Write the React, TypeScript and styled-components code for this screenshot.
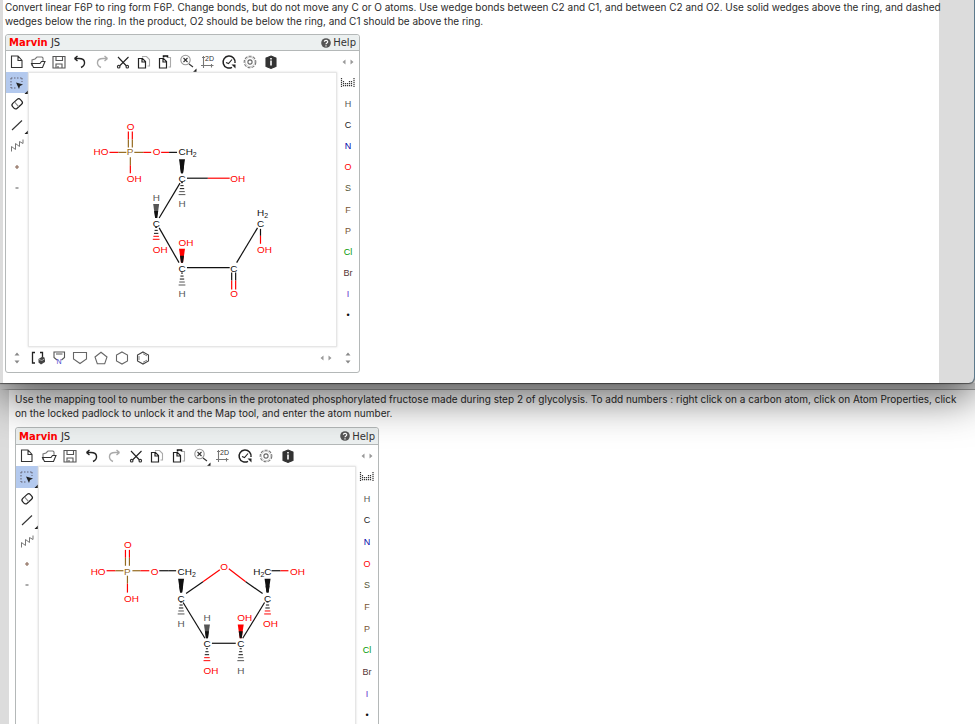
import React from "react";
import styled, { createGlobalStyle } from "styled-components";

const GlobalStyle = createGlobalStyle`
  * { box-sizing: border-box; }
  body {
    margin: 0;
    background: #fff;
    font-family: Verdana, "DejaVu Sans", sans-serif;
    font-size: 10px;
    color: #2b2b2b;
  }
`;

const Screen = styled.div`
  display: flex;
  flex-direction: column;
  height: 100vh;
  overflow: hidden;
`;

const FrontWindow = styled.section`
  display: flex;
  flex: none;
  z-index: 1;
  padding: 0 35px 0 3px;
  background: #dcdcdc;
  border-right: 1px solid #5d7a8c;
  border-bottom-right-radius: 6px;
  box-shadow: 0 14px 44px rgba(0, 0, 0, 0.62), 0 1px 1px rgba(0, 0, 0, 0.5);
`;

const FrontPage = styled.div`
  flex: 1;
  min-width: 0;
  padding: 0 0 10px 2px;
  background: #fff;
`;

const BackWindow = styled.section`
  display: flex;
  flex: 1;
  min-height: 0;
  flex-direction: column;
  border-top: 6px solid #dadada;
`;

const BackPage = styled.div`
  flex: 1;
  min-height: 0;
  padding: 2px 0 0 6px;
  border-top: 1px solid #a4a4a4;
  border-left: 9px solid #dcdcdc;
`;

const Prompt = styled.p<{ $gap: number }>`
  margin: 0 0 ${(p) => p.$gap}px;
  font-family: Verdana, Inter, sans-serif;
  line-height: 14px;
  white-space: nowrap;
`;

const Line = styled.span`
  display: block;
`;

const Editor = styled.div<{ $wide?: boolean }>`
  width: ${(p) => (p.$wide ? 364 : 355)}px;
  border: 1px solid #b4b8b8;
  border-radius: 3px;
  background: #fff;
`;

const Header = styled.header<{ $wide?: boolean }>`
  display: flex;
  align-items: center;
  justify-content: space-between;
  height: ${(p) => (p.$wide ? 17 : 16)}px;
  padding: 0 3px;
  border-bottom: 1px solid #b4b8b8;
  border-radius: 3px 3px 0 0;
  background: #ecf0f0;
`;

const Brand = styled.span`
  b { color: #f00; }
`;

const Help = styled.a`
  display: flex;
  align-items: center;
  gap: 2px;
  color: #333;
  text-decoration: none;
`;

const Body = styled.div<{ $canvas: number }>`
  display: grid;
  grid-template-columns: 22px 1fr 22px;
  grid-template-rows: 21px ${(p) => p.$canvas}px auto;
`;

const Toolbar = styled.div<{ $wide?: boolean }>`
  display: flex;
  grid-column: 1 / 3;
  width: ${(p) => (p.$wide ? 283 : 276)}px;
`;

const SideBar = styled.div<{ $height: number }>`
  display: flex;
  flex-direction: column;
  height: ${(p) => p.$height}px;
`;

const Tool = styled.button<{ $active?: boolean; $tone?: string }>`
  display: flex;
  flex: 1;
  min-width: 0;
  min-height: 0;
  align-items: center;
  justify-content: center;
  padding: 0;
  border: 0;
  background: ${(p) => (p.$active ? "#b3c9ee" : "transparent")};
  color: ${(p) => p.$tone ?? "#222"};
  font: 9px "Liberation Sans", Arial, sans-serif;
`;

const Corner = styled.div`
  display: flex;
`;

const Canvas = styled.div`
  border: 1px solid #e6e6e6;
  box-shadow: 0 0 2px #d8d8d8;
  background: #fff;
  svg { display: block; width: 100%; height: 100%; }
`;

const BottomBar = styled.div`
  display: flex;
  grid-column: 1 / 3;
  justify-content: space-between;
  padding-bottom: 3px;
`;

const BottomCorner = styled(Corner)`
  padding-bottom: 3px;
`;

const Group = styled.div<{ $width: number }>`
  display: flex;
  width: ${(p) => p.$width}px;
`;

const Glyph = styled.svg`
  display: block;
  flex: none;
  width: 22px;
  height: 22px;
  overflow: visible;
  fill: none;
  stroke: #333;
  stroke-width: 1.1;
`;

const HelpGlyph = styled.svg`
  display: block;
  width: 10px;
  height: 10px;
`;

const icons: Record<string, React.ReactNode> = {
  New: <path d="M5.500 5h6.500l4 4.500V16.500H5.500zM12 5v4.500h4" />,
  Open: <><path d="M5 15V9l3-1 2-2h5l1 1v3" stroke="#777" /><path d="M4.500 12.500h8.500l1.500-2H18l-2.500 6H6.500z" /></>,
  Save: <path d="M5 5.500h12v11.500H5zM8 5.500v4h6.500v-4M8 17v-4h6v4M10 15v1.500" stroke="#555" />,
  Undo: <path d="M5.500 7.500L8.500 5M5.500 7.500l3 2.500M6 7.500h4c7 0 7 6.500 2 9" stroke="#222" strokeWidth="1.400" />,
  Redo: <path d="M16.500 7.500L13.500 5M16.500 7.500l-3 2.500M16 7.500h-4c-7 0-7 6.500-2 9" stroke="#aaa" strokeWidth="1.400" />,
  Cut: <><path d="M6 6l8.500 9M16.500 6l-9 9" stroke="#222" /><circle cx="6.700" cy="15.700" r="1.300" /><circle cx="15.300" cy="15.700" r="1.300" /></>,
  Copy: <><path d="M9.500 6.500V5.500h4l3 3V15h-2" stroke="#aaa" /><path d="M5.500 7.500h4l3 3v6.500h-7zM9 8v3h3.500" stroke="#222" strokeWidth="1.200" /></>,
  Paste: <><path d="M14 6.500h2.500V16h-2" stroke="#aaa" /><path d="M5.500 7.500h4l3 3v6.500h-7zM9 8v3h3.500" stroke="#222" strokeWidth="1.200" /><path d="M9.500 6.500V5h4v1.500" stroke="#111" strokeWidth="1.500" /></>,
  Zoom: <><circle cx="9.500" cy="9" r="4.700" stroke="#999" /><path d="M7.500 7l4 4m0-4l-4 4M13 13l4 3" /><path d="M20.500 17.500V21H17z" fill="#111" stroke="none" /></>,
  "Clean 2D": <><path d="M6.500 5v12M4 14.500h12.500M14.500 13v3.500M5 6.500h3" stroke="#777" /><text x="8" y="10" fontSize="7" fontFamily="Liberation Sans" fill="#333" stroke="none">2D</text></>,
  Check: <><path d="M14 16.300A6 6 0 1 1 17 12" stroke="#222" strokeWidth="1.500" /><path d="M8 11.500l2.500 1L14 8.500" stroke="#222" /><path d="M13.500 13.500h4v4z" fill="#222" stroke="none" /></>,
  Settings: <><circle cx="11" cy="11" r="5.800" stroke="#777" strokeDasharray="3 1.200" /><circle cx="11" cy="11" r="4.700" stroke="#bbb" strokeWidth=".8" /><circle cx="11" cy="11" r="2.100" stroke="#666" /></>,
  About: <><path d="M11 5l5 2v8.500L11 17.500 6 15.500V7z" fill="#333" /><path d="M11 9.500v5M11 7v1.500" stroke="#fff" strokeWidth="1.600" /></>,
  Select: <><path d="M5 6h11M5 16h5M5 6v10M16 6v4" stroke="#667" strokeDasharray="1.500 1.500" /><path d="M10 10.500l7 2-3 1.500-1 3z" fill="#222" stroke="none" /><path d="M22 18.500V22h-3.500z" fill="#111" stroke="none" /></>,
  Erase: <g transform="rotate(-42 11 11)"><rect x="6" y="7.700" width="10.500" height="6.600" rx="2.300" stroke="#222" strokeWidth="1.200" /><path d="M10.500 8v6" stroke="#888" /></g>,
  Bond: <><path d="M6 16l10-9.500" stroke="#333" /><path d="M22 16.500V20h-3.500z" fill="#111" stroke="none" /></>,
  Chain: <path d="M5.500 16.500v-5l4 3v-6l4 3V6.500l3.500 2V4.500" stroke="#777" strokeWidth="1" />,
  "Increase charge": <path d="M9 11h4M11 9v4" stroke="#865" />,
  "Decrease charge": <path d="M9.500 11h3" stroke="#666" />,
  Periodic: <path d="M4.500 6v9M6.500 9v6M8.500 11v4M10.500 11v4M12.500 9v6M14.500 9v6M17 6v9" stroke="#333" strokeWidth="1.200" strokeDasharray="1.200 .8" />,
  Across: <path d="M8.500 8.500v5L5.500 11zM13.500 8.500v5l3-2.500z" fill="#999" stroke="none" />,
  Scroll: <path d="M8.500 8.500h5L11 5.500zM8.500 13.500h5L11 16.500z" fill="#888" stroke="none" />,
  Bracket: <><path d="M8 5.500H5.500V16H8M13 5.500h2.500V10" stroke="#222" strokeWidth="1.300" /><path d="M11.500 12l4-2.500 2.500 1.500v4l-4 2.500-2.500-2z" fill="#444" stroke="none" /><path d="M12 12.500l3 1 3-2" stroke="#bbb" strokeWidth=".8" /></>,
  Pyrrole: <><path d="M9 13L6 10.500V5h10.500v5.500l-3 2.500M8 7h6.500" stroke="#555" /><text x="8.500" y="17" fontSize="7" fontFamily="Liberation Sans" fill="#44c" stroke="none">N</text></>,
  Cyclopentane: <path d="M4.500 5.500h13v6.500L11 16.500 4.500 12z" stroke="#666" />,
  Pentagon: <path d="M11 5.300l6 4.700-2.300 6.700H7.300L5 10z" stroke="#666" />,
  Hexagon: <path d="M11 5l5.500 3v6L11 17l-5.500-3V8z" stroke="#666" />,
  Benzene: <><path d="M11 5l5.500 3v6L11 17l-5.500-3V8z" stroke="#444" /><path d="M11 6.700l4 2.200M15 13.100l-4 2.200M7 9v4" stroke="#777" strokeWidth=".9" /></>,
};

const Icon = ({ name }: { name: string }) => (
  <Glyph viewBox="0 0 22 22" aria-hidden="true">{icons[name]}</Glyph>
);

const IconTool = ({ name, active }: { name: string; active?: boolean }) => (
  <Tool type="button" aria-label={name} $active={active}><Icon name={name} /></Tool>
);

const RED = "#f00";
const GREY = "#555";
const INK = "#111";
const GOLD = "#94691e";

type Seg = [number, number, number, number, string];
type Atom = { x: number; y: number; text: string; color: string; sub?: string; lead?: string };
type Wedge = { x: number; y: number; dir: 1 | -1; tip: string; base: string; hashed?: boolean };
type Molecule = { atoms: Atom[]; bonds: Seg[]; wedges: Wedge[] };

const linear: Molecule = {
  atoms: [
    { x: 130, y: 125, text: "O", color: RED },
    { x: 130, y: 151, text: "P", color: GOLD },
    { x: 104, y: 151, text: "O", lead: "H", color: RED },
    { x: 130, y: 178, text: "OH", color: RED },
    { x: 156, y: 151, text: "O", color: RED },
    { x: 182, y: 151, text: "CH", sub: "2", color: INK },
    { x: 182, y: 178, text: "C", color: INK },
    { x: 234, y: 178, text: "OH", color: RED },
    { x: 182, y: 203, text: "H", color: GREY },
    { x: 156, y: 197, text: "H", color: GREY },
    { x: 156, y: 223, text: "C", color: INK },
    { x: 156, y: 249, text: "OH", color: RED },
    { x: 182, y: 242, text: "OH", color: RED },
    { x: 182, y: 268, text: "C", color: INK },
    { x: 182, y: 294, text: "H", color: GREY },
    { x: 234, y: 268, text: "C", color: INK },
    { x: 234, y: 294, text: "O", color: RED },
    { x: 261, y: 212, text: "H", sub: "2", color: INK },
    { x: 261, y: 223, text: "C", color: INK },
    { x: 261, y: 249, text: "OH", color: RED },
  ],
  bonds: [
    [109, 152, 118, 152, RED], [118, 152, 126, 152, GOLD],
    [134, 152, 143, 152, GOLD], [143, 152, 151, 152, RED],
    [161, 152, 169, 152, RED], [169, 152, 177, 152, INK],
    [128, 131, 128, 139, RED], [128, 139, 128, 147, GOLD],
    [132, 131, 132, 139, RED], [132, 139, 132, 147, GOLD],
    [130, 157, 130, 165, GOLD], [130, 165, 130, 173, RED],
    [187, 178, 208, 178, INK], [208, 178, 230, 178, RED],
    [180, 183, 159, 218, INK], [159, 228, 179, 263, INK],
    [187, 268, 230, 268, INK], [237, 263, 258, 228, INK],
    [232, 273, 232, 281, INK], [232, 281, 232, 290, RED],
    [236, 273, 236, 281, INK], [236, 281, 236, 290, RED],
    [261, 229, 261, 236, INK], [261, 236, 261, 244, RED],
  ],
  wedges: [
    { x: 182, y: 173, dir: -1, tip: INK, base: INK },
    { x: 182, y: 182, dir: 1, tip: INK, base: GREY, hashed: true },
    { x: 156, y: 218, dir: -1, tip: INK, base: GREY },
    { x: 156, y: 227, dir: 1, tip: INK, base: RED, hashed: true },
    { x: 182, y: 263, dir: -1, tip: INK, base: RED },
    { x: 182, y: 273, dir: 1, tip: INK, base: GREY, hashed: true },
  ],
};

const ring: Molecule = {
  atoms: [
    { x: 127, y: 544, text: "O", color: RED },
    { x: 127, y: 571, text: "P", color: GOLD },
    { x: 101, y: 571, text: "O", lead: "H", color: RED },
    { x: 127, y: 598, text: "OH", color: RED },
    { x: 154, y: 571, text: "O", color: RED },
    { x: 181, y: 571, text: "CH", sub: "2", color: INK },
    { x: 181, y: 598, text: "C", color: INK },
    { x: 181, y: 624, text: "H", color: GREY },
    { x: 224, y: 566, text: "O", color: RED },
    { x: 268, y: 571, text: "C", lead: "H2", color: INK },
    { x: 294, y: 571, text: "OH", color: RED },
    { x: 268, y: 598, text: "C", color: INK },
    { x: 267, y: 624, text: "OH", color: RED },
    { x: 207, y: 618, text: "H", color: GREY },
    { x: 207, y: 644, text: "C", color: INK },
    { x: 207, y: 671, text: "OH", color: RED },
    { x: 241, y: 618, text: "OH", color: RED },
    { x: 241, y: 644, text: "C", color: INK },
    { x: 241, y: 671, text: "H", color: GREY },
  ],
  bonds: [
    [106, 571, 115, 571, RED], [115, 571, 123, 571, GOLD],
    [132, 571, 140, 571, GOLD], [140, 571, 149, 571, RED],
    [159, 571, 168, 571, INK], [168, 571, 176, 571, INK],
    [125, 550, 125, 558, RED], [125, 558, 125, 566, GOLD],
    [129, 550, 129, 558, RED], [129, 558, 129, 566, GOLD],
    [127, 576, 127, 584, GOLD], [127, 584, 127, 593, RED],
    [186, 594, 203, 582, INK], [203, 582, 220, 570, RED],
    [229, 569, 246, 582, RED], [246, 582, 263, 594, INK],
    [272, 571, 281, 571, INK], [281, 571, 289, 571, RED],
    [183, 603, 205, 639, INK], [265, 603, 243, 639, INK],
    [212, 644, 236, 644, INK],
  ],
  wedges: [
    { x: 181, y: 593, dir: -1, tip: INK, base: INK },
    { x: 181, y: 602, dir: 1, tip: INK, base: GREY, hashed: true },
    { x: 268, y: 593, dir: -1, tip: INK, base: INK },
    { x: 268, y: 602, dir: 1, tip: INK, base: RED, hashed: true },
    { x: 207, y: 639, dir: -1, tip: INK, base: GREY },
    { x: 207, y: 649, dir: 1, tip: INK, base: RED, hashed: true },
    { x: 241, y: 639, dir: -1, tip: INK, base: RED },
    { x: 241, y: 649, dir: 1, tip: INK, base: GREY, hashed: true },
  ],
};

const WedgeMark = ({ x, y, dir, tip, base, hashed }: Wedge) => {
  if (hashed) {
    return (
      <g>
        {[0, 1, 2, 3, 4].map((i) => (
          <line key={i} x1={x - 1 - i * 0.6} x2={x + 1 + i * 0.6} y1={y + dir * (i * 3 + 0.5)} y2={y + dir * (i * 3 + 0.5)} stroke={i < 3 ? tip : base} />
        ))}
      </g>
    );
  }
  return (
    <g stroke="none">
      <path d={`M${x - 3} ${y + dir * 14}h6L${x + 1} ${y}h-2z`} fill={base} />
      <path d={`M${x - 2} ${y + dir * 7}h4L${x + 1} ${y}h-2z`} fill={tip} />
    </g>
  );
};

const Structure = ({ molecule, viewBox }: { molecule: Molecule; viewBox: string }) => (
  <svg viewBox={viewBox} role="img" aria-label="Molecule" fontFamily="Liberation Sans, Arial, sans-serif" fontSize="10">
    {molecule.bonds.map(([x1, y1, x2, y2, c], i) => (
      <line key={i} x1={x1} y1={y1} x2={x2} y2={y2} stroke={c} strokeWidth="1.200" />
    ))}
    {molecule.wedges.map((w, i) => <WedgeMark key={i} {...w} />)}
    {molecule.atoms.map((a, i) => (
      <text key={i} x={a.lead ? a.x + 4 : a.x - 3.5} y={a.y + 4} fill={a.color} textAnchor={a.lead ? "end" : "start"}>
        {a.lead?.[0]}
        {a.lead?.[1] && <><tspan dy="2" fontSize="7">{a.lead[1]}</tspan><tspan dy="-2">{a.text}</tspan></>}
        {!a.lead?.[1] && a.text}
        {a.sub && <tspan dy="2" fontSize="7">{a.sub}</tspan>}
      </text>
    ))}
  </svg>
);

const topTools = ["New", "Open", "Save", "Undo", "Redo", "Cut", "Copy", "Paste", "Zoom", "Clean 2D", "Check", "Settings", "About"];
const leftTools = ["Select", "Erase", "Bond", "Chain", "Increase charge", "Decrease charge"];
const templates = ["Bracket", "Pyrrole", "Cyclopentane", "Pentagon", "Hexagon", "Benzene"];
const elements: [string, string][] = [
  ["H", "#555"], ["C", "#222"], ["N", "#00a"], ["O", "#f00"], ["S", "#553"], ["F", "#753"],
  ["P", "#753"], ["Cl", "#090"], ["Br", "#533"], ["I", "#63c"], ["•", "#111"],
];

type EditorProps = {
  wide?: boolean;
  templateBar?: boolean;
  canvas: number;
  elementsHeight: number;
  toolsHeight: number;
  children: React.ReactNode;
};

const MarvinEditor = ({ wide, templateBar, canvas, elementsHeight, toolsHeight, children }: EditorProps) => (
  <Editor $wide={wide}>
    <Header $wide={wide}>
      <Brand><b>Marvin</b> JS</Brand>
      <Help href="#help">
        <HelpGlyph viewBox="0 0 10 10" aria-hidden="true">
          <circle cx="5" cy="5" r="4.800" fill="#555" />
          <path d="M3.300 3.800C3.500 1.800 7 2 6.700 4 6.500 5 5 5 5 6.300M5 7.200v1.200" fill="none" stroke="#fff" strokeWidth="1.200" />
        </HelpGlyph>
        Help
      </Help>
    </Header>
    <Body $canvas={canvas}>
      <Toolbar $wide={wide}>{topTools.map((t) => <IconTool key={t} name={t} />)}</Toolbar>
      <Corner><IconTool name="Across" /></Corner>
      <SideBar $height={toolsHeight}>
        {leftTools.map((t, i) => <IconTool key={t} name={t} active={i === 0} />)}
      </SideBar>
      <Canvas>{children}</Canvas>
      <SideBar $height={elementsHeight}>
        <IconTool name="Periodic" />
        {elements.map(([e, tone]) => <Tool type="button" key={e} $tone={tone}>{e}</Tool>)}
      </SideBar>
      {templateBar && (
        <>
          <BottomBar>
            <Group $width={148}><IconTool name="Scroll" />{templates.map((t) => <IconTool key={t} name={t} />)}</Group>
            <Group $width={22}><IconTool name="Across" /></Group>
          </BottomBar>
          <BottomCorner><IconTool name="Scroll" /></BottomCorner>
        </>
      )}
    </Body>
  </Editor>
);

export default function App() {
  return (
    <Screen>
      <GlobalStyle />
      <FrontWindow>
        <FrontPage>
          <Prompt $gap={6}>
            <Line>Convert linear F6P to ring form F6P. Change bonds, but do not move any C or O atoms. Use wedge bonds between C2 and C1, and between C2 and O2. Use solid wedges above the ring, and dashed</Line>
            <Line>wedges below the ring. In the product, O2 should be below the ring, and C1 should be above the ring.</Line>
          </Prompt>
          <MarvinEditor templateBar canvas={275} elementsHeight={254} toolsHeight={127}>
            <Structure molecule={linear} viewBox="28 73 309 273" />
          </MarvinEditor>
        </FrontPage>
      </FrontWindow>
      <BackWindow>
        <BackPage>
          <Prompt $gap={7}>
            <Line>Use the mapping tool to number the carbons in the protonated phosphorylated fructose made during step 2 of glycolysis. To add numbers : right click on a carbon atom, click on Atom Properties, click</Line>
            <Line>on the locked padlock to unlock it and the Map tool, and enter the atom number.</Line>
          </Prompt>
          <MarvinEditor wide canvas={283} elementsHeight={260} toolsHeight={130}>
            <Structure molecule={ring} viewBox="38 468 318 280" />
          </MarvinEditor>
        </BackPage>
      </BackWindow>
    </Screen>
  );
}
